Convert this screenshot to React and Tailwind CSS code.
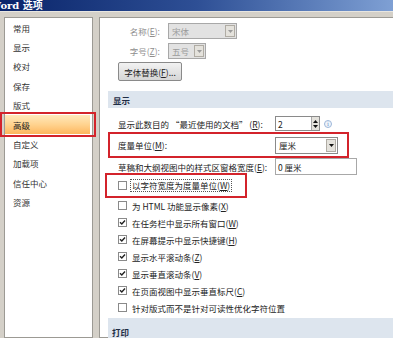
import React from 'react';

const navItems = ['常用', '显示', '校对', '保存', '版式', '高级', '自定义', '加载项', '信任中心', '资源'];

const checks = [
  { on: false, text: <>为 HTML 功能显示像素(<u>X</u>)</> },
  { on: true, text: <>在任务栏中显示所有窗口(<u>W</u>)</> },
  { on: true, text: <>在屏幕提示中显示快捷键(<u>H</u>)</> },
  { on: true, text: <>显示水平滚动条(<u>Z</u>)</> },
  { on: true, text: <>显示垂直滚动条(<u>V</u>)</> },
  { on: true, text: <>在页面视图中显示垂直标尺(<u>C</u>)</> },
  { on: false, text: <>针对版式而不是针对可读性优化字符位置</> },
];

function CheckBox({ on }) {
  return (
    <span className="w-[9px] h-[9px] shrink-0 border border-[#8a8a8a] bg-white flex items-center justify-center">
      {on && (
        <svg width="7" height="7" viewBox="0 0 7 7">
          <path d="M1 3.2 L2.8 5 L6 1.5" fill="none" stroke="#222" strokeWidth="1.4" />
        </svg>
      )}
    </span>
  );
}

function DropButton({ disabled }) {
  return (
    <span className="w-[10px] self-stretch m-[1px] bg-[#e4e2dc] border border-[#b0aca4] flex items-center justify-center">
      <svg width="5" height="3" viewBox="0 0 5 3">
        <path d="M0 0 H5 L2.5 3 Z" fill={disabled ? '#9a9a9a' : '#111'} />
      </svg>
    </span>
  );
}

export default function App() {
  return (
    <div className="w-[393px] h-[338px] overflow-hidden bg-[#d4d0c8] flex flex-col text-[8.5px] leading-[12px] text-[#222] font-['Noto_Sans_CJK_SC',sans-serif]">
      {/* title bar */}
      <div className="h-[12px] shrink-0 bg-linear-to-r from-[#0a246a] via-[#2e4f95] to-[#7fa0d4] flex items-center border-b border-[#e8e6e0]">
        <span className="-ml-[10px] text-white font-bold text-[10px] leading-none whitespace-nowrap font-['DejaVu_Serif','Noto_Sans_CJK_SC',serif]">
          Word 选项
        </span>
      </div>

      <div className="flex flex-1 pt-[5px] min-h-0">
        {/* left nav */}
        <div className="ml-[4px] w-[89px] shrink-0 bg-white border border-[#9c9a94]">
          {navItems.map((item) =>
            item === '高级' ? (
              <div key={item} className="relative h-[19.4px] mr-[2px] flex items-center pl-[8px] text-[#222] bg-linear-to-b from-[#ffe8ba] via-[#ffd38f] to-[#fdb65c]">
                {item}
                <span className="absolute -left-[5px] -right-[6px] -top-[3px] -bottom-[3px] border-2 border-[#d3232b]" />
              </div>
            ) : (
              <div key={item} className="h-[19.4px] flex items-center pl-[8px] text-[#333]">
                {item}
              </div>
            )
          )}
        </div>

        {/* right panel */}
        <div className="ml-[6px] flex-1 bg-white border border-r-0 border-[#9c9a94]">
          {/* font (disabled) */}
          <div className="mt-[5px] flex items-center">
            <span className="w-[60px] text-right text-[#8e8e8e]">名称(<u>E</u>):</span>
            <div className="ml-[8px] w-[69px] h-[16px] bg-[#e2e2e2] border border-[#a8a8a8] flex items-center">
              <span className="flex-1 pl-[3px] text-[#9a9a9a]">宋体</span>
              <DropButton disabled />
            </div>
          </div>
          <div className="mt-[4px] flex items-center">
            <span className="w-[60px] text-right text-[#8e8e8e]">字号(<u>Z</u>):</span>
            <div className="ml-[8px] w-[38px] h-[16px] bg-[#e2e2e2] border border-[#a8a8a8] flex items-center">
              <span className="flex-1 pl-[3px] text-[#9a9a9a]">五号</span>
              <DropButton disabled />
            </div>
          </div>
          <div className="mt-[3px] ml-[18px] w-[64px] h-[19px] bg-linear-to-b from-[#f2f2f2] to-[#d6d6d6] border border-[#8a8a8a] rounded-[2px] flex items-center justify-center">
            字体替换(<u>F</u>)...
          </div>

          {/* 显示 section */}
          <div className="mt-[10px] ml-[8px] h-[17px] bg-[#dde5ee] flex items-center pl-[5px] font-bold text-[#1f2d45]">
            显示
          </div>

          <div className="mt-[8px] h-[15px] flex items-center pl-[18px]">
            <span className="w-[157px] whitespace-nowrap">显示此数目的 “最近使用的文档” (<u>R</u>):</span>
            <div className="w-[45px] h-[15px] border border-[#8a8a8a] flex items-stretch">
              <span className="flex-1 pl-[2px] flex items-center">2</span>
              <span className="w-[8px] bg-[#e4e2dc] border-l border-[#a8a8a8] flex flex-col items-center justify-center gap-[2px]">
                <svg width="5" height="3" viewBox="0 0 5 3"><path d="M0 3 H5 L2.5 0 Z" fill="#111" /></svg>
                <svg width="5" height="3" viewBox="0 0 5 3"><path d="M0 0 H5 L2.5 3 Z" fill="#111" /></svg>
              </span>
            </div>
            <span className="ml-[4px] w-[8px] h-[8px] rounded-full border border-[#9db7da] bg-[#eef4fb] text-[6px] leading-none text-[#6f93c6] flex items-center justify-center font-['DejaVu_Serif',serif]">
              i
            </span>
          </div>

          <div className="mt-[1px] ml-[8px] w-[241px] h-[26px] border-2 border-[#d3232b] flex items-center pl-[8px]">
            <span className="w-[157px]">度量单位(<u>M</u>):</span>
            <div className="w-[63px] h-[17px] border border-[#8a8a8a] flex items-center">
              <span className="flex-1 pl-[3px]">厘米</span>
              <DropButton />
            </div>
          </div>

          <div className="h-[17px] flex items-center pl-[18px]">
            <span className="w-[157px] whitespace-nowrap">草稿和大纲视图中的样式区窗格宽度(<u>E</u>):</span>
            <div className="w-[82px] h-[17px] border border-[#a8a8a8] flex items-center pl-[2px]">0 厘米</div>
          </div>

          <div className="-mt-[2px] ml-[5px] w-[142px] h-[25px] border-2 border-[#d3232b] flex items-center pl-[11px]">
            <CheckBox on={false} />
            <span className="ml-[3px] px-[1px] border border-dotted border-[#555] leading-[11px] whitespace-nowrap">
              以字符宽度为度量单位(<u>W</u>)
            </span>
          </div>

          <div className="-mt-[1px]">
            {checks.map((c, i) => (
              <div key={i} className="h-[17px] flex items-center pl-[18px] whitespace-nowrap">
                <CheckBox on={c.on} />
                <span className="ml-[5px]">{c.text}</span>
              </div>
            ))}
          </div>

          {/* 打印 section */}
          <div className="mt-[2px] ml-[8px] h-[28px] bg-[#dde5ee] flex items-center pl-[4px] font-bold text-[#1f2d45]">
            打印
          </div>
        </div>
      </div>
    </div>
  );
}
